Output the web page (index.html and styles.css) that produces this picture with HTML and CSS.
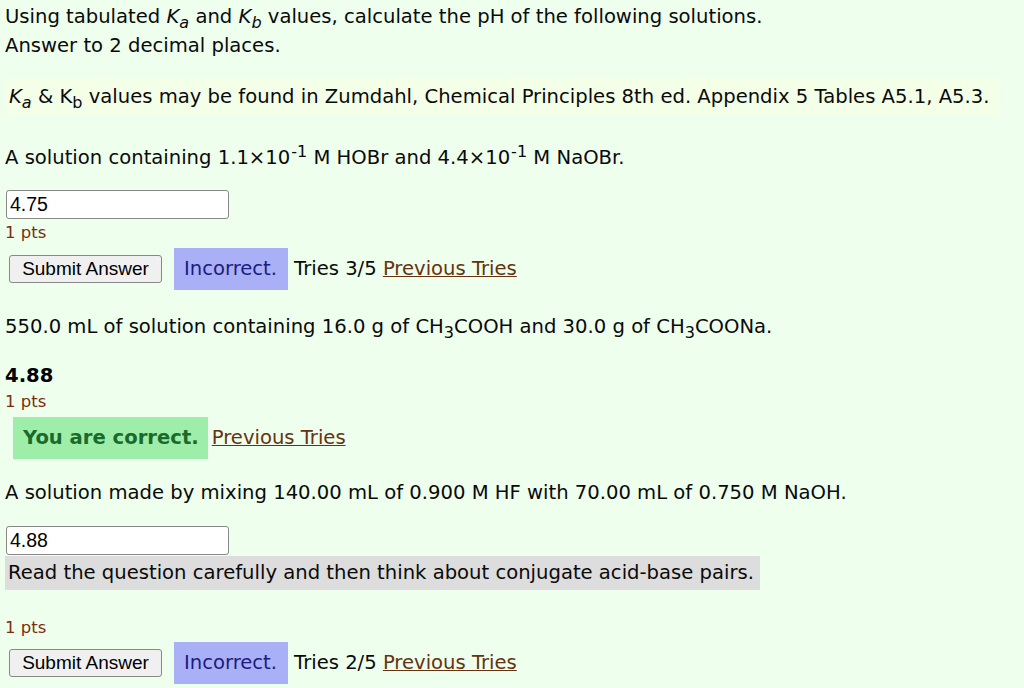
FILE: index.html
```html
<!DOCTYPE html>
<html>
<head>
<meta charset="utf-8">
<link rel="stylesheet" href="styles.css">
</head>
<body>
<div class="page">
  <div class="intro">Using tabulated <i>K</i><sub class="it">a</sub> and <i>K</i><sub class="it">b</sub> values, calculate the pH of the following solutions.<br>Answer to 2 decimal places.</div>
  <div class="note"><i>K</i><sub class="it">a</sub> &amp; K<sub>b</sub> values may be found in Zumdahl, Chemical Principles 8th ed. Appendix 5 Tables A5.1, A5.3.</div>

  <div class="question q1">A solution containing 1.1×10<sup>-1</sup> M HOBr and 4.4×10<sup>-1</sup> M NaOBr.</div>
  <div class="answer"><input class="field" type="text" value="4.75"></div>
  <div class="pts">1 pts</div>
  <div class="row">
    <button class="submit">Submit Answer</button>
    <span class="incorrect">Incorrect.</span>
    <span class="tries">Tries 3/5 <a href="#">Previous Tries</a></span>
  </div>

  <div class="question q2">550.0 mL of solution containing 16.0 g of CH<sub>3</sub>COOH and 30.0 g of CH<sub>3</sub>COONa.</div>
  <div class="given">4.88</div>
  <div class="pts pts2">1 pts</div>
  <div class="row row2">
    <span class="correct">You are correct.</span>
    <span class="tries"><a href="#">Previous Tries</a></span>
  </div>

  <div class="question q3">A solution made by mixing 140.00 mL of 0.900 M HF with 70.00 mL of 0.750 M NaOH.</div>
  <div class="answer a3"><input class="field" type="text" value="4.88"></div>
  <div class="hint">Read the question carefully and then think about conjugate acid-base pairs.</div>
  <div class="pts pts3">1 pts</div>
  <div class="row row3">
    <button class="submit">Submit Answer</button>
    <span class="incorrect">Incorrect.</span>
    <span class="tries">Tries 2/5 <a href="#">Previous Tries</a></span>
  </div>
</div>
</body>
</html>
```

FILE: styles.css
```css
html, body {
  margin: 0;
  padding: 0;
  background: #eeffee;
}
.page {
  font-family: "DejaVu Sans", Verdana, sans-serif;
  font-size: 19.6px;
  color: #0a0a0a;
  padding: 2px 0 0 5px;
}
sub, sup {
  font-size: 0.82em;
  line-height: 0;
}
sub { vertical-align: -0.3em; }
sup { vertical-align: 0.45em; padding-left: 1px; }
sub.it { font-style: italic; }
.intro {
  line-height: 29px;
}
.note {
  margin-top: 17.5px;
  margin-right: 24px;
  background: #f4ffe8;
  padding: 7px 4px;
  line-height: 23px;
}
.question {
  line-height: 23px;
}
.q1 { margin-top: 31.5px; }
.q2 { margin-top: 25.5px; }
.q3 { margin-top: 22.5px; }
.answer {
  margin-top: 20.5px;
  height: 29px;
}
.field {
  box-sizing: border-box;
  display: block;
  width: 223px;
  height: 29px;
  margin: 0 0 0 1px;
  padding: 1px 3px;
  border: 1px solid #888;
  border-radius: 3px;
  background: #fff;
  font-family: "Liberation Sans", Arial, sans-serif;
  font-size: 19.5px;
  color: #000;
}
.pts {
  font-size: 16.5px;
  color: #7a2e0e;
  line-height: 18px;
  margin-top: 5px;
}
.row {
  display: flex;
  align-items: center;
  margin-top: 6px;
  height: 42px;
}
.submit {
  box-sizing: border-box;
  height: 28px;
  width: 153px;
  margin-left: 4px;
  padding: 0;
  border: 1px solid #888;
  border-radius: 3px;
  background: #f0f0f0;
  font-family: "Liberation Sans", Arial, sans-serif;
  font-size: 19px;
  color: #000;
}
.incorrect {
  margin-left: 12px;
  background: #aab0f5;
  color: #1c1c82;
  padding: 0 11px 0 10px;
  height: 42px;
  line-height: 42px;
}
.tries {
  margin-left: 6px;
}
.tries a {
  color: #663311;
  text-decoration: underline;
}
.given {
  margin-top: 26px;
  font-weight: bold;
  line-height: 23px;
  color: #000;
}
.pts2 {
  margin-top: 5.5px;
}
.row2 {
  margin-top: 6px;
}
.correct {
  margin-left: 8px;
  background: #9eeeaa;
  color: #1b6a2c;
  font-weight: bold;
  padding: 0 9px 0 10px;
  height: 42px;
  line-height: 42px;
}
.row2 .tries {
  margin-left: 4px;
}
.a3 {
  margin-top: 21.5px;
}
.hint {
  display: inline-block;
  margin-top: 1px;
  background: #dddddd;
  line-height: 34px;
  padding: 0 6px 0 3px;
}
.pts3 {
  margin-top: 29px;
}
.row3 {
  margin-top: 5px;
}
```
